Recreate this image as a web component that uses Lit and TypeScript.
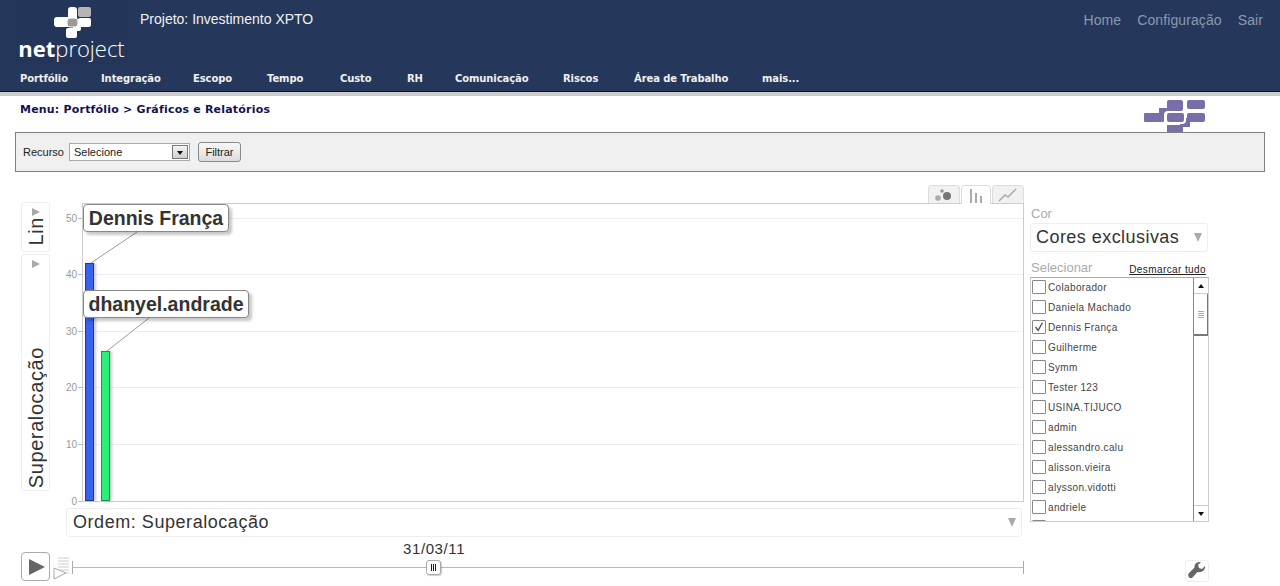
import { LitElement, html, css } from "lit";
import { customElement } from "lit/decorators.js";

const nav = [
  ["Portfólio", 20], ["Integração", 101], ["Escopo", 193], ["Tempo", 267], ["Custo", 340],
  ["RH", 407], ["Comunicação", 455], ["Riscos", 563], ["Área de Trabalho", 634], ["mais...", 762],
] as [string, number][];
const people = ["Colaborador", "Daniela Machado", "Dennis França", "Guilherme", "Symm", "Tester 123", "USINA.TIJUCO", "admin", "alessandro.calu", "alisson.vieira", "alysson.vidotti", "andriele", ""];
const ticks = [[50, 14], [40, 70], [30, 127], [20, 183], [10, 240], [0, 297]] as [number, number][];

@customElement("app-root")
export class AppRoot extends LitElement {
  static styles = css`
    :host { display: block; width: 1280px; height: 586px; overflow: hidden; background: #fff; font-family: "Liberation Sans", Arial, sans-serif; color: #222; }
    header { height: 91px; background: #25375b; position: relative; border-bottom: 1px solid #111; }
    .top { display: flex; height: 68px; }
    .logo { width: 113px; margin-left: 15px; height: 64px; background: #233558; display: flex; flex-direction: column; align-items: center; }
    .logo svg { margin-top: 7px; display: block; margin-left: 1px; }
    .word { font-family: "Open Sans", sans-serif; font-size: 22px; line-height: 24px; color: #fff; font-weight: 300; margin-top: -2px; }
    .word b { font-weight: 700; }
    .project { color: #f1f1f1; font-size: 14px; margin: 11px 0 0 12px; line-height: 16px; }
    .links { margin-left: auto; display: flex; gap: 16px; margin-right: 17px; margin-top: 12px; font-size: 14px; line-height: 16px; color: #8c99ae; letter-spacing: 0.1px; }
    .nav { position: relative; height: 23px; font: bold 10px "DejaVu Sans", Verdana, sans-serif; color: #f0f0f0; }
    .nav span { position: absolute; top: 5px; white-space: nowrap; letter-spacing: -0.1px; }
    .band { height: 4px; background: #ccc; }
    .crumbs { height: 36px; display: flex; justify-content: space-between; padding: 0 74px 0 20px; position: relative; }
    .crumbs h1 { margin: 7px 0 0; font: bold 11px "DejaVu Sans", Verdana, sans-serif; color: #14134e; letter-spacing: 0.2px; line-height: 13px; }
    .crumbs svg { margin-top: 4px; display: block; }
    .filter { margin-left: 15px; width: 1250px; height: 40px; background: #f0f0f0; border: 1px solid #808080; display: flex; align-items: center; font-size: 11px; padding-left: 7px; box-sizing: border-box; }
    .sel { margin-left: 5px; width: 121px; height: 18px; background: #fff; border: 1px solid #a9a9a9; display: flex; align-items: center; justify-content: space-between; padding-left: 4px; box-sizing: border-box; }
    .sel i { width: 16px; height: 14px; border: 1px solid #777; box-sizing: border-box; background: linear-gradient(#f4f4f4, #cfcfcf); position: relative; margin-right: 1px; display: block; }
    .sel i::after { content: ""; position: absolute; left: 4px; top: 5px; border: 3px solid transparent; border-top: 4px solid #111; border-bottom: 0; }
    .btn { margin-left: 8px; width: 41px; height: 18px; border: 1px solid #8a8a8a; border-radius: 3px; background: linear-gradient(#f8f8f8, #dcdcdc); display: flex; align-items: center; justify-content: center; }
    .chart { display: grid; grid-template-columns: 82px 942px 184px; grid-template-rows: 31px 298px 36px 44px; height: 414px; }
    .axisbtns { grid-row: 2; grid-column: 1; padding-left: 21px; display: flex; flex-direction: column; gap: 2px; margin-top: -1px; }
    .axis { width: 29px; box-sizing: border-box; border: 1px solid #eee; border-radius: 3px; display: flex; flex-direction: column; align-items: center; background: #fff; }
    .axis.lin { height: 50px; }
    .axis.sup { height: 237px; }
    .arrow { width: 0; height: 0; border-left: 8px solid #aaa; border-top: 4px solid transparent; border-bottom: 4px solid transparent; margin-top: 5px; }
    .axis span { writing-mode: vertical-rl; transform: rotate(180deg); font-size: 20px; line-height: 27px; color: #333; white-space: nowrap; margin-left: 2px; }
    .axis.lin span { margin-top: 1px; letter-spacing: 0.6px; }
    .axis.sup span { margin-top: auto; margin-bottom: 2px; letter-spacing: 0.6px; }
    .tabs { grid-row: 1; grid-column: 2; display: flex; justify-content: flex-end; align-items: flex-end; gap: 1px; }
    .tab { width: 32px; height: 18px; box-sizing: border-box; border: 1px solid #ddd; border-bottom: 0; border-radius: 4px 4px 0 0; background: #f1f1f1; display: flex; align-items: center; justify-content: center; }
    .tab.on { background: #fff; width: 30px; height: 19px; margin-bottom: -1px; position: relative; z-index: 2; }
    .plot { grid-row: 2; grid-column: 2; position: relative; border: 1px solid #ccc; box-sizing: border-box; height: 299px; }
    .grid { position: absolute; left: 0; right: 0; height: 1px; background: #eee; }
    .tick { position: absolute; right: 100%; margin-right: 1px; width: 30px; text-align: right; font-size: 10px; line-height: 12px; color: #999; white-space: nowrap; }
    .tick::after { content: ""; display: inline-block; width: 4px; height: 1px; background: #bbb; vertical-align: 3px; margin-left: 1px; }
    .bar { position: absolute; bottom: 0; box-sizing: border-box; border: 1px solid; box-shadow: 2px 0 3px rgba(0,0,0,.22); }
    .lines { position: absolute; left: 0; top: 0; }
    .tip { position: absolute; left: 0; height: 28px; background: #fff; border: 1px solid #888; border-radius: 4px; box-shadow: 3px 3px 3px rgba(0,0,0,.22); box-sizing: border-box; font: bold 19.500px/27px "Liberation Sans", Arial, sans-serif; color: #333; white-space: nowrap; text-align: center; }
    .side { grid-row: 1 / 4; grid-column: 3; padding-left: 6px; padding-top: 35px; }
    .dim { color: #aaa; font-size: 13px; line-height: 14px; padding-left: 1px; }
    .colsel { width: 178px; height: 29px; margin-top: 2px; border: 1px solid #eee; border-radius: 3px; box-sizing: border-box; display: flex; align-items: center; justify-content: space-between; font-size: 18px; color: #333; padding: 0 5px; letter-spacing: 0.45px; }
    .down { width: 0; height: 0; border-top: 9px solid #aaa; border-left: 4px solid transparent; border-right: 4px solid transparent; }
    .selhead { display: flex; justify-content: space-between; margin-top: 9px; height: 16px; width: 176px; align-items: flex-start; }
    .selhead a { font-size: 10px; color: #222; text-decoration: underline; margin-top: 3px; letter-spacing: 0.4px; white-space: nowrap; }
    .list { width: 179px; height: 245px; border: 1px solid #ccc; box-sizing: border-box; display: flex; overflow: hidden; border-top-color: #aaa; }
    .items { flex: 1; overflow: hidden; margin-top: -1px; }
    .item { height: 20px; display: flex; align-items: center; padding-left: 1px; font-size: 10px; color: #444; letter-spacing: 0.35px; gap: 2px; }
    .cb { width: 14px; height: 14px; border: 1px solid #888; box-sizing: border-box; border-radius: 1px; background: #fff; flex: none; display: block; }
    .sb { width: 15px; border-left: 1px solid #888; display: flex; flex-direction: column; background: #fff; box-sizing: border-box; }
    .sbtn { height: 16px; border: 0 solid #ccc; border-bottom-width: 1px; box-sizing: border-box; position: relative; flex: none; background: #fff; }
    .sbtn.dn { border-width: 1px 0 0 0; margin-top: auto; }
    .sbtn::after { content: ""; position: absolute; left: 4px; top: 6px; border: 3px solid transparent; border-bottom: 4px solid #111; border-top: 0; }
    .sbtn.dn::after { border-bottom: 0; border-top: 4px solid #111; }
    .thumb { height: 42px; border-right: 1px solid #777; border-bottom: 2px solid #777; background: #fff; box-sizing: border-box; display: flex; flex-direction: column; align-items: center; justify-content: center; gap: 1px; }
    .thumb u { width: 6px; height: 1px; background: #aaa; display: block; }
    .ordem { grid-row: 3; grid-column: 1 / 3; margin: 7px 2px 0 66px; height: 29px; border: 1px solid #eee; border-radius: 3px; box-sizing: border-box; display: flex; align-items: center; justify-content: space-between; font-size: 18px; color: #333; padding: 0 5px 0 6px; letter-spacing: 0.55px; }
    .player { grid-row: 4; grid-column: 1 / 4; position: relative; display: flex; align-items: flex-start; padding-left: 21px; padding-top: 15px; }
    .play { width: 29px; height: 29px; border: 1px solid #aaa; border-radius: 4px; box-sizing: border-box; display: flex; align-items: center; justify-content: center; background: #fff; flex: none; }
    .play::before { content: ""; border-left: 16px solid #666; border-top: 8px solid transparent; border-bottom: 8px solid transparent; margin-left: 2px; }
    .speed { margin: 3px 0 0 3px; flex: none; display: block; }
    .slider { position: relative; width: 952px; height: 44px; margin-top: -15px; flex: none; }
    .track { position: absolute; left: 0; right: 0; top: 24px; height: 13px; border-left: 1px solid #aaa; border-right: 1px solid #aaa; box-sizing: border-box; }
    .track::before { content: ""; position: absolute; left: 0; right: 0; top: 6px; height: 1px; background: #bbb; }
    .date { position: absolute; left: 331px; top: 4px; font-size: 15px; line-height: 16px; color: #333; letter-spacing: 0.6px; }
    .knob { position: absolute; left: 354px; top: 23px; width: 15px; height: 15px; border: 1px solid #aaa; border-radius: 3px; box-sizing: border-box; background: #fff; display: flex; gap: 1px; align-items: center; justify-content: center; box-shadow: 1px 1px 1px rgba(0,0,0,.2); }
    .knob b { width: 1px; height: 7px; background: #222; }
    .wrench { position: absolute; left: 1185px; top: 23px; width: 24px; height: 22px; border: 1px solid #eee; border-radius: 3px; box-sizing: border-box; display: flex; align-items: center; justify-content: center; }
  `;

  render() {
    return html`
      <header>
        <div class="top">
          <div class="logo">
            <svg width="37" height="31" viewBox="0 0 37 31">
              <rect x="0" y="10" width="18" height="10" rx="3" fill="#fff"/>
              <rect x="14" y="0" width="9" height="14" rx="3" fill="#fff"/>
              <rect x="24" y="0" width="13" height="10" rx="2" fill="#b5b5b5"/>
              <rect x="24" y="11" width="13" height="9" rx="2" fill="#fff"/>
              <rect x="12" y="21" width="11" height="10" rx="2" fill="#fff"/>
              <rect x="19" y="15" width="8" height="9" rx="2" fill="#fff"/>
              <rect x="13" y="11" width="11" height="9" rx="3" fill="#9a9a9a" stroke="#fff"/>
            </svg>
            <div class="word"><b>net</b>project</div>
          </div>
          <div class="project">Projeto: Investimento XPTO</div>
          <div class="links"><span>Home</span><span>Configuração</span><span>Sair</span></div>
        </div>
        <nav class="nav">${nav.map(([t, x]) => html`<span style="left:${x}px">${t}</span>`)}</nav>
      </header>
      <div class="band"></div>
      <div class="crumbs">
        <h1>Menu: Portfólio &gt; Gráficos e Relatórios</h1>
        <svg width="62" height="32" viewBox="0 0 62 32">
          <rect x="0" y="13" width="20" height="9" rx="1" fill="#7a6ea8"/>
          <rect x="23" y="0" width="16" height="11" rx="2" fill="#7a6ea8"/>
          <rect x="15" y="8" width="12" height="8" fill="#7a6ea8"/>
          <rect x="43" y="0" width="18" height="9" rx="2" fill="#7a6ea8"/>
          <rect x="43" y="13" width="18" height="9" rx="2" fill="#7a6ea8"/>
          <rect x="23" y="25" width="16" height="7" fill="#7a6ea8"/>
          <rect x="36" y="18" width="10" height="9" fill="#7a6ea8"/>
          <rect x="20" y="11" width="22" height="13" rx="4" fill="#fff"/>
          <rect x="23" y="13" width="17" height="9" rx="2" fill="#7a6ea8"/>
        </svg>
      </div>
      <div class="filter">
        <span>Recurso</span>
        <div class="sel"><span>Selecione</span><i></i></div>
        <div class="btn">Filtrar</div>
      </div>
      <div class="chart">
        <div class="tabs">
          <div class="tab"><svg width="20" height="14" viewBox="0 0 20 14"><circle cx="8" cy="3" r="1.800" fill="#999"/><circle cx="4" cy="10" r="2.800" fill="#aaa"/><circle cx="13" cy="8" r="4" fill="#777"/></svg></div>
          <div class="tab on"><svg width="16" height="15" viewBox="0 0 16 15"><path d="M3 1v14M8 5v10M13 8v7" stroke="#888" stroke-width="1.400" fill="none"/></svg></div>
          <div class="tab"><svg width="20" height="14" viewBox="0 0 20 14"><path d="M1 13l6-6 3 2 8-8" stroke="#aaa" stroke-width="1.500" fill="none"/></svg></div>
        </div>
        <div class="axisbtns">
          <div class="axis lin"><div class="arrow"></div><span>Lin</span></div>
          <div class="axis sup"><div class="arrow"></div><span>Superalocação</span></div>
        </div>
        <div class="plot">
          ${ticks.map(([v, y]) => html`
            ${v > 0 ? html`<div class="grid" style="top:${y}px"></div>` : ""}
            <div class="tick" style="top:${y - 5}px">${v}</div>`)}
          <div class="bar" style="left:2px;width:9px;height:238px;background:#3a62f0;border-color:#1d3c96"></div>
          <div class="bar" style="left:18px;width:9px;height:150px;background:#2bf078;border-color:#1d8f4c"></div>
          <svg class="lines" width="80" height="160"><path d="M8 59L54 28M24 147L66 114" stroke="#999" fill="none"/></svg>
          <div class="tip" style="top:0;width:146px">Dennis França</div>
          <div class="tip" style="top:86px;width:166px">dhanyel.andrade</div>
        </div>
        <div class="side">
          <div class="dim">Cor</div>
          <div class="colsel"><span>Cores exclusivas</span><div class="down"></div></div>
          <div class="selhead"><span class="dim">Selecionar</span><a>Desmarcar tudo</a></div>
          <div class="list">
            <div class="items">
              ${people.map((p, i) => html`<div class="item">
                ${i === 2
                  ? html`<svg class="cb" viewBox="0 0 14 14"><path d="M3 7l3 4 5-9" stroke="#555" stroke-width="1.600" fill="none"/></svg>`
                  : html`<span class="cb"></span>`}
                <span>${p}</span></div>`)}
            </div>
            <div class="sb">
              <div class="sbtn"></div>
              <div class="thumb"><u></u><u></u><u></u><u></u></div>
              <div class="sbtn dn"></div>
            </div>
          </div>
        </div>
        <div class="ordem"><span>Ordem: Superalocação</span><div class="down"></div></div>
        <div class="player">
          <div class="play"></div>
          <svg class="speed" width="19" height="26" viewBox="0 0 19 26">
            <path d="M5 3h11M5 6h11M5 9h11M5 12h11M5 15h11M5 18h11" stroke="#ccc"/>
            <path d="M1 13l12 5-12 6z" fill="#fff" stroke="#aaa"/>
          </svg>
          <div class="slider">
            <div class="track"></div>
            <div class="date">31/03/11</div>
            <div class="knob"><b></b><b></b><b></b></div>
          </div>
          <div class="wrench"><svg width="18" height="18" viewBox="0 0 18 18"><path fill="#666" d="M17 4l-3 3-3-1-1-3 3-3c-3-.5-7 1-6.500 5.500L1 11c-2 2 0 6 3 5l5.500-6C14 11 17.500 8 17 4z"/></svg></div>
        </div>
      </div>
    `;
  }
}
